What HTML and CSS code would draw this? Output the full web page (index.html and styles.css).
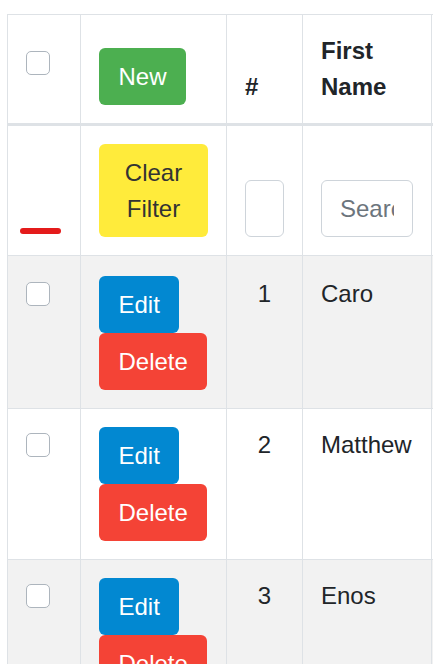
FILE: index.html
```html
<!DOCTYPE html>
<html lang="en">
<head>
<meta charset="utf-8">
<title>Table</title>
<link rel="stylesheet" href="styles.css">
</head>
<body>
<table class="grid">
  <colgroup>
    <col class="c-check">
    <col class="c-actions">
    <col class="c-num">
    <col class="c-first">
    <col class="c-last">
  </colgroup>
  <thead>
    <tr class="head-row">
      <th class="cell-check"><input type="checkbox" class="check check-head"></th>
      <th><button class="btn btn-new">New</button></th>
      <th>#</th>
      <th>First Name</th>
      <th></th>
    </tr>
  </thead>
  <tbody>
    <tr class="filter-row">
      <td class="cell-bar"><span class="bar"></span></td>
      <td><button class="btn btn-clear">Clear Filter</button></td>
      <td><input class="field" type="text"></td>
      <td><input class="field" type="text" placeholder="Search"></td>
      <td></td>
    </tr>
    <tr class="data-row first-data striped">
      <td><input type="checkbox" class="check"></td>
      <td><div class="actions"><button class="btn btn-edit">Edit</button><button class="btn btn-delete">Delete</button></div></td>
      <td class="num">1</td>
      <td>Caro</td>
      <td></td>
    </tr>
    <tr class="data-row">
      <td><input type="checkbox" class="check"></td>
      <td><div class="actions"><button class="btn btn-edit">Edit</button><button class="btn btn-delete">Delete</button></div></td>
      <td class="num">2</td>
      <td>Matthew</td>
      <td></td>
    </tr>
    <tr class="data-row striped">
      <td><input type="checkbox" class="check"></td>
      <td><div class="actions"><button class="btn btn-edit">Edit</button><button class="btn btn-delete">Delete</button></div></td>
      <td class="num">3</td>
      <td>Enos</td>
      <td></td>
    </tr>
  </tbody>
</table>
</body>
</html>
```
FILE: styles.css
```css
html, body {
  margin: 0;
  padding: 0;
  overflow: hidden;
  background: #ffffff;
}
body {
  font-family: "Liberation Sans", Arial, sans-serif;
  font-size: 24px;
  line-height: 36px;
  color: #212529;
}
.grid {
  margin: 14px 0 0 7px;
  border-collapse: collapse;
  table-layout: fixed;
  width: 624px;
}
.c-check { width: 73px; }
.c-actions { width: 146px; }
.c-num { width: 76px; }
.c-first { width: 129px; }
.c-last { width: 200px; }

.grid th, .grid td {
  border: 1px solid #dee2e6;
  padding: 18px;
  text-align: left;
}
.grid th {
  font-weight: bold;
  vertical-align: bottom;
}
.head-row th {
  border-bottom: 3px solid #dee2e6;
}
.head-row .cell-check {
  vertical-align: top;
}
.check {
  appearance: none;
  -webkit-appearance: none;
  display: block;
  width: 24px;
  height: 24px;
  margin: 6px 0 0 0;
  border: 1px solid #adb5bd;
  border-radius: 5px;
  background: #ffffff;
}
.check-head {
  margin-top: 18px;
}
.btn {
  display: inline-block;
  font-family: inherit;
  font-size: 24px;
  line-height: 36px;
  padding: 9.5px 18.5px;
  border: 1px solid transparent;
  border-radius: 6px;
  color: #ffffff;
  text-align: center;
  cursor: pointer;
}
.btn-new { background: #4caf50; }
.btn-edit { background: #0288d1; }
.btn-delete { background: #f44336; }
.btn-clear { background: #ffeb3b; color: #333333; }

.filter-row td {
  vertical-align: bottom;
}
.filter-row .cell-bar {
  padding-left: 12px;
  padding-bottom: 21px;
}
.bar {
  display: block;
  width: 41px;
  height: 6px;
  border-radius: 3px;
  background: #e41b1b;
}
.field {
  display: block;
  box-sizing: border-box;
  width: 100%;
  height: 57px;
  padding: 9px 18px;
  font-family: inherit;
  font-size: 24px;
  line-height: 36px;
  color: #212529;
  border: 1px solid #ced4da;
  border-radius: 6px;
  background: #ffffff;
}
.field::placeholder {
  color: #6c757d;
}
.data-row td {
  vertical-align: top;
}
.first-data td {
  padding-top: 20px;
}
.striped td {
  background: #f2f2f2;
}
.actions {
  display: flex;
  flex-direction: column;
  align-items: flex-start;
}
.grid .num {
  text-align: center;
}
```
